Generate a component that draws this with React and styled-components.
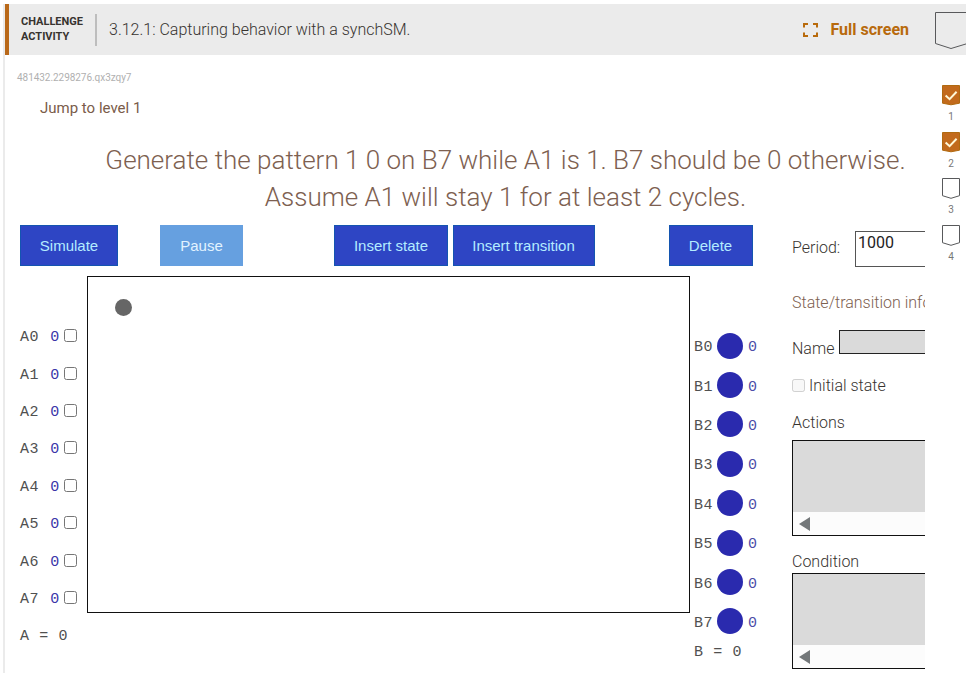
import React, { useState } from "react";
import styled, { createGlobalStyle } from "styled-components";

const inputNames = ["A0", "A1", "A2", "A3", "A4", "A5", "A6", "A7"];
const outputNames = ["B0", "B1", "B2", "B3", "B4", "B5", "B6", "B7"];
const levels = [
	{ id: 1, done: true },
	{ id: 2, done: true },
	{ id: 3, done: false },
	{ id: 4, done: false },
];

function FullScreenIcon() {
	return (
		<svg width="15" height="14" viewBox="0 0 15 14" fill="none">
			<path
				d="M1 4.5V1h4M10 1h4v3.5M14 9.5V13h-4M5 13H1V9.5"
				stroke="#b86a0c"
				strokeWidth="2"
			/>
		</svg>
	);
}

function LevelIcon({ done }) {
	return (
		<svg width="18" height="21" viewBox="0 0 18 21" fill="none">
			<path
				d={done ? "M.5.5h17v17.7L9 19.8.5 18.200z" : "M.5.5h17v17.2L9 20.3.5 17.7z"}
				fill={done ? "#c26a1c" : "#fff"}
				stroke={done ? "#b06a10" : "#58595b"}
			/>
			{done && (
				<path d="M3.6 10.4l4 3.8 7-7.4" stroke="#fff8d8" strokeWidth="2" />
			)}
		</svg>
	);
}

export default function App() {
	const [inputs, setInputs] = useState(inputNames.map(() => false));

	const toggleInput = (index) => {
		setInputs(inputs.map((v, i) => (i === index ? !v : v)));
	};

	const total = inputs.reduce((sum, v, i) => sum + (v ? 2 ** i : 0), 0);

	return (
		<Page>
			<GlobalStyle />
			<Activity>
				<Header>
					<ActivityType>
						CHALLENGE
						<br />
						ACTIVITY
					</ActivityType>
					<Title>3.12.1: Capturing behavior with a synchSM.</Title>
					<FullScreen>
						<FullScreenIcon />
						Full screen
					</FullScreen>
					<svg width="31" height="38" viewBox="0 0 31 38" fill="none">
						<path d="M.5.5h32v31L16 36.5.5 31.500z" stroke="#58595b" />
					</svg>
				</Header>
				<Body>
					<Main>
						<ActivityId>481432.2298276.qx3zqy7</ActivityId>
						<JumpLink>Jump to level 1</JumpLink>
						<Prompt>
							Generate the pattern 1 0 on B7 while A1 is 1. B7 should be 0
							otherwise.
							<br />
							Assume A1 will stay 1 for at least 2 cycles.
						</Prompt>
						<Tool>
							<Simulator>
								<Toolbar>
									<Button $width={98}>Simulate</Button>
									<Button $width={83} $left={42} disabled>
										Pause
									</Button>
									<Button $width={114} $left={91}>
										Insert state
									</Button>
									<Button $width={142} $left={4.5}>
										Insert transition
									</Button>
									<Button $width={84} $left={74}>
										Delete
									</Button>
								</Toolbar>
								<Workspace>
									<Inputs>
										{inputNames.map((name, i) => (
											<InputRow key={name}>
												<Signal>{name}</Signal>
												<Bit>{inputs[i] ? 1 : 0}</Bit>
												<Checkbox
													type="checkbox"
													checked={inputs[i]}
													onChange={() => toggleInput(i)}
												/>
											</InputRow>
										))}
										<InputRow>
											<Signal>A = {total}</Signal>
										</InputRow>
									</Inputs>
									<Canvas>
										<StartDot />
									</Canvas>
									<Outputs>
										{outputNames.map((name) => (
											<OutputRow key={name}>
												<Signal>{name}</Signal>
												<Led />
												<OutputBit>0</OutputBit>
											</OutputRow>
										))}
										<OutputTotal>B = 0</OutputTotal>
									</Outputs>
								</Workspace>
							</Simulator>
							<Info>
								<PeriodRow>
									<PeriodLabel>Period:</PeriodLabel>
									<PeriodBox>1000</PeriodBox>
								</PeriodRow>
								<InfoTitle>State/transition info</InfoTitle>
								<NameRow>
									<NameLabel>Name</NameLabel>
									<NameBox />
								</NameRow>
								<InitialRow>
									<Checkbox type="checkbox" disabled />
									Initial state
								</InitialRow>
								<AreaLabel $top={18}>Actions</AreaLabel>
								<Area $top={7}>
									<Scrollbar />
								</Area>
								<AreaLabel $top={16}>Condition</AreaLabel>
								<Area $top={1}>
									<Scrollbar />
								</Area>
							</Info>
						</Tool>
					</Main>
					<Levels>
						{levels.map((level) => (
							<Level key={level.id}>
								<LevelIcon done={level.done} />
								<LevelNumber>{level.id}</LevelNumber>
							</Level>
						))}
					</Levels>
				</Body>
			</Activity>
		</Page>
	);
}

const GlobalStyle = createGlobalStyle`
	* {
		box-sizing: border-box;
	}

	body {
		margin: 0;
		overflow: hidden;
		background: #fff;
		font-family: Roboto, sans-serif;
	}
`;

const Page = styled.div`
	height: 673px;
	padding: 4px 0 0 3px;
	overflow: hidden;
`;

const Activity = styled.div`
	height: 669px;
	border-left: 2px solid #ebebeb;
`;

const Header = styled.div`
	display: flex;
	align-items: center;
	height: 51px;
	background: #ebebeb;
	border-left: 4px solid #b9691a;

	> svg {
		flex: none;
		margin: 3px 0 0 26px;
	}
`;

const ActivityType = styled.div`
	width: 88px;
	height: 32px;
	padding-left: 12px;
	border-right: 2px solid #bdbdbd;
	font-size: 11px;
	font-weight: 700;
	line-height: 15px;
	color: #37332f;
`;

const Title = styled.div`
	flex: 1;
	padding-left: 12px;
	font-size: 16px;
	font-weight: 300;
	color: #37332f;
`;

const FullScreen = styled.div`
	display: flex;
	align-items: center;
	gap: 12px;
	font-size: 16px;
	font-weight: 700;
	color: #b86a0c;
`;

const Body = styled.div`
	display: flex;
	height: 618px;
`;

const Main = styled.div`
	width: 920px;
	overflow: hidden;
`;

const ActivityId = styled.div`
	margin: 13px 0 0 12px;
	font-size: 10px;
	line-height: 20px;
	letter-spacing: -0.05px;
	color: #b0b0b0;
`;

const JumpLink = styled.div`
	margin: 10px 0 0 35px;
	font-size: 15px;
	line-height: 20px;
	color: #7a5c4a;
`;

const Prompt = styled.div`
	margin: 24px 0 0 81px;
	font-size: 26px;
	font-weight: 300;
	line-height: 37px;
	text-align: center;
	white-space: nowrap;
	color: #7d6050;
`;

const Tool = styled.div`
	display: flex;
	margin: 9px 0 0 15px;
`;

const Simulator = styled.div`
	flex: none;
	width: 772px;
`;

const Toolbar = styled.div`
	display: flex;
`;

const Button = styled.button`
	width: ${(props) => props.$width}px;
	height: 41px;
	margin-left: ${(props) => props.$left || 0}px;
	padding: 0;
	border: 1px solid #1455b0;
	background: #2e45c4;
	color: #b4ecff;
	font-family: "Liberation Sans", sans-serif;
	font-size: 15px;
	white-space: nowrap;

	&:disabled {
		border-color: #66a0e0;
		background: #66a0e0;
		color: #e2f3ff;
	}
`;

const Workspace = styled.div`
	display: flex;
	padding-top: 10px;
	font-family: "Liberation Mono", monospace;
	font-size: 15px;
	letter-spacing: 0.6px;
	color: #505050;
`;

const Inputs = styled.div`
	width: 67px;
	padding-top: 41px;
`;

const InputRow = styled.div`
	display: flex;
	align-items: center;
	height: 37.4px;
	white-space: pre;
`;

const Signal = styled.span`
	padding-top: 4px;
`;

const Bit = styled.span`
	margin-left: 11px;
	padding-top: 4px;
	color: #3a35a8;
`;

const Checkbox = styled.input`
	width: 13px;
	height: 13px;
	margin: 0 0 0 4px;
`;

const Canvas = styled.div`
	width: 603px;
	height: 337px;
	padding: 21.5px 26.5px;
	border: 1px solid #111;
`;

const StartDot = styled.div`
	width: 17px;
	height: 17px;
	border-radius: 50%;
	background: #666;
`;

const Outputs = styled.div`
	padding: 50px 0 0 4px;
`;

const OutputRow = styled.div`
	display: flex;
	align-items: center;
	height: 39.4px;
`;

const Led = styled.div`
	width: 26px;
	height: 26px;
	margin-left: 3.9px;
	border-radius: 50%;
	background: #2a2aae;
`;

const OutputBit = styled.span`
	margin-left: 5px;
	padding-top: 4px;
	color: #4c4ca8;
`;

const OutputTotal = styled.div`
	padding-top: 2px;
	line-height: 20px;
`;

const Info = styled.div`
	flex: none;
	width: 200px;
	padding-top: 6px;
	font-size: 16px;
	font-weight: 300;
	color: #37332f;

	${Checkbox} {
		margin: 0 4px 0 0;
	}
`;

const PeriodRow = styled.div`
	display: flex;
	height: 36px;
`;

const PeriodLabel = styled.span`
	width: 63px;
	line-height: 33px;
`;

const PeriodBox = styled.div`
	width: 137px;
	padding: 1px 2px;
	border: 1px solid #555;
	font-weight: 400;
	line-height: 20px;
	color: #222;
`;

const InfoTitle = styled.div`
	margin-top: 26px;
	line-height: 20px;
	color: #7d6050;
`;

const NameRow = styled.div`
	display: flex;
	height: 36px;
	margin-top: 17px;
`;

const NameLabel = styled.span`
	line-height: 38px;
`;

const NameBox = styled.div`
	width: 150px;
	height: 24px;
	margin-left: 5px;
	border: 1px solid #222;
	background: #dadada;
`;

const InitialRow = styled.div`
	display: flex;
	align-items: center;
	height: 20px;
	margin-top: 9px;
`;

const AreaLabel = styled.div`
	margin-top: ${(props) => props.$top}px;
	line-height: 20px;
`;

const Area = styled.div`
	display: flex;
	flex-direction: column;
	justify-content: flex-end;
	width: 200px;
	height: 96px;
	margin-top: ${(props) => props.$top}px;
	border: 1px solid #111;
	background: #dadada;
`;

const Scrollbar = styled.div`
	display: flex;
	align-items: center;
	height: 23px;
	padding-left: 6px;
	background: #fcfcfc;

	&::before {
		content: "";
		border: 7px solid transparent;
		border-right: 11px solid #74787a;
		border-left: 0;
	}
`;

const Levels = styled.div`
	width: 41px;
	padding: 30px 0 0 17px;
`;

const Level = styled.div`
	width: 18px;
	height: 46.7px;

	svg {
		display: block;
	}
`;

const LevelNumber = styled.div`
	margin-top: 5px;
	font-size: 10px;
	line-height: 12px;
	text-align: center;
	color: #777;
`;
